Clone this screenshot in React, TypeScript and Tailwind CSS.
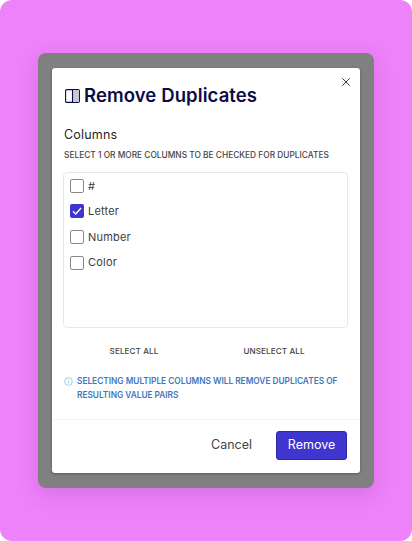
import { X } from "lucide-react"

const columns = [
  { name: "#", checked: false },
  { name: "Letter", checked: true },
  { name: "Number", checked: false },
  { name: "Color", checked: false },
]

function ColumnRow({ name, checked }: { name: string; checked: boolean }) {
  return (
    <div className="flex h-[25.6px] items-center gap-[4px]">
      {checked ? (
        <span className="flex h-[14px] w-[14px] items-center justify-center rounded-[2px] bg-[#3f35cf]">
          <svg width="12" height="12" viewBox="0 0 12 12" fill="none" stroke="#fff" strokeWidth="1.3">
            <path d="M2 6.3 4.8 9 10 3" />
          </svg>
        </span>
      ) : (
        <span className="h-[14px] w-[14px] rounded-[2px] border border-[#8a8a8a] bg-white" />
      )}
      <span className="text-[11px] tracking-[0.2px] text-[#3d3d3d]">{name}</span>
    </div>
  )
}

export default function App() {
  return (
    <div className="h-[541px] w-[412px] overflow-hidden bg-white font-['Inter',sans-serif]">
      <div className="h-full rounded-[12px] bg-[#ee82fb] px-[38px] pt-[53px]">
        <div className="h-[435px] w-[336px] rounded-[8px] bg-[#808080] px-[14px] pt-[15px] shadow-[0_6px_20px_rgba(120,40,130,0.2)]">
          <div className="relative flex h-[405px] w-[308px] flex-col rounded-[3px] bg-white shadow-[0_1px_3px_rgba(0,0,0,0.3)]">
            <button className="absolute right-[7px] top-[7px] text-[#1f1f1f]">
              <X size={14} strokeWidth={1.5} />
            </button>

            <div className="flex flex-1 flex-col px-[12px]">
              <div className="mt-[14px] flex h-[27px] items-center gap-[4px] pl-[1px]">
                <svg width="15" height="14" viewBox="0 0 15 14" fill="none" stroke="#0c0c45" strokeWidth="1.1">
                  <rect x="0.6" y="0.6" width="13.8" height="12.8" rx="1.2" />
                  <rect x="8" y="1.2" width="5.8" height="11.6" fill="#c9c9d6" stroke="none" />
                  <path d="M7.5 0.6v12.8" />
                </svg>
                <h1 className="text-[18.5px] font-semibold tracking-[0.1px] text-[#0c0c45]">Remove Duplicates</h1>
              </div>

              <div className="mt-[17px] text-[12.5px] leading-[18px] tracking-[0.2px] text-[#1f1f1f]">Columns</div>
              <div className="mt-[4px] whitespace-nowrap text-[8.35px] font-medium leading-[14px] text-[#444]">
                SELECT 1 OR MORE COLUMNS TO BE CHECKED FOR DUPLICATES
              </div>

              <div className="-ml-px mt-[10px] h-[156px] w-[285px] rounded-[4px] border border-[#e8e8ec] px-[6px]">
                {columns.map((c) => (
                  <ColumnRow key={c.name} name={c.name} checked={c.checked} />
                ))}
              </div>

              <div className="mt-[16px] grid grid-cols-2 text-[8.1px] font-medium leading-[14px] tracking-[0.1px] text-[#444]">
                <div className="pr-[2px] text-center">SELECT ALL</div>
                <div className="pr-[6px] text-center">UNSELECT ALL</div>
              </div>

              <div className="mt-[16px] flex items-start gap-[4px]">
                <svg className="mt-[3px] shrink-0" width="9" height="9" viewBox="0 0 9 9" fill="none" stroke="#7cc9dc" strokeWidth="0.8">
                  <circle cx="4.5" cy="4.5" r="3.9" />
                  <path d="M4.5 4v2.5M4.5 2.4v.8" />
                </svg>
                <p className="text-[8.3px] font-semibold leading-[14px] text-[#3f78bd]">
                  SELECTING MULTIPLE COLUMNS WILL REMOVE DUPLICATES OF RESULTING VALUE PAIRS
                </p>
              </div>
            </div>

            <div className="flex h-[54px] items-center justify-end gap-[24px] border-t border-[#f3f3f3] pb-[2px] pr-[13px]">
              <span className="text-[12.5px] text-[#444]">Cancel</span>
              <button className="flex h-[29px] w-[71px] items-center justify-center rounded-[3px] border border-[#2f28a8] bg-[#3f35cf] text-[12.5px] text-white">
                Remove
              </button>
            </div>
          </div>
        </div>
      </div>
    </div>
  )
}
